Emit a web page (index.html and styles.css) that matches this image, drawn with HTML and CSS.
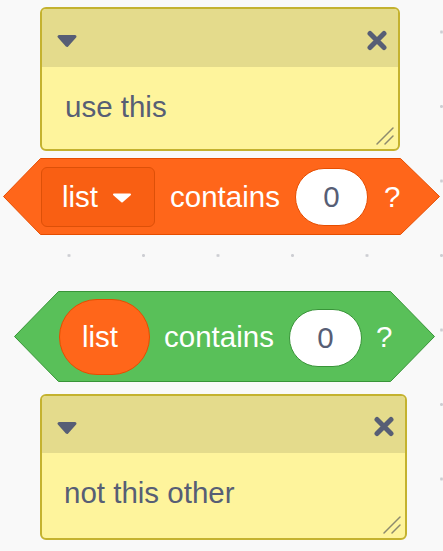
FILE: index.html
```html
<!DOCTYPE html>
<html>
<head>
<meta charset="utf-8">
<link rel="stylesheet" href="styles.css">
</head>
<body>
<div class="ws">
  <div class="note note-a">
    <div class="note-head">
      <svg class="tri" width="22" height="14" viewBox="0 0 22 14"><path d="M3 2.5 H19 L11 11.5 Z" fill="#575e75" stroke="#575e75" stroke-width="3" stroke-linejoin="round"/></svg>
      <svg class="x" width="22" height="21" viewBox="0 0 22 21"><path d="M4 3.5 L18 17.5 M18 3.5 L4 17.5" stroke="#575e75" stroke-width="5" stroke-linecap="round"/></svg>
    </div>
    <div class="note-body">use this
      <svg class="grip" width="20" height="20" viewBox="0 0 20 20"><path d="M2 18 L18 2 M10 18 L18 10" stroke="#8d8a6e" stroke-width="1.5" stroke-linecap="round"/></svg>
    </div>
  </div>

  <div class="block block-list">
    <svg class="shape" width="437" height="77" viewBox="0 0 437 77"><polygon points="0.5,38.5 37.5,0.5 397.5,0.5 436.5,38.5 397.5,76.5 37.5,76.5" fill="#ff661a" stroke="#e64d00"/></svg>
    <div class="dd">list<svg class="dd-tri" width="20" height="10" viewBox="0 0 20 10"><path d="M2 1.5 H18 L10 8.5 Z" fill="#fff" stroke="#fff" stroke-width="2" stroke-linejoin="round"/></svg></div>
    <span class="lbl lbl-c1">contains</span>
    <div class="field field-o">0</div>
    <span class="lbl q1">?</span>
  </div>

  <div class="block block-op">
    <svg class="shape" width="421" height="91" viewBox="0 0 421 91"><polygon points="0.5,45.5 44.5,0.5 376.5,0.5 420.5,45.5 376.5,90.5 44.5,90.5" fill="#59c059" stroke="#389438"/></svg>
    <div class="rep">list</div>
    <span class="lbl lbl-c2">contains</span>
    <div class="field field-g">0</div>
    <span class="lbl q2">?</span>
  </div>

  <div class="note note-b">
    <div class="note-head">
      <svg class="tri" width="22" height="14" viewBox="0 0 22 14"><path d="M3 2.5 H19 L11 11.5 Z" fill="#575e75" stroke="#575e75" stroke-width="3" stroke-linejoin="round"/></svg>
      <svg class="x" width="22" height="21" viewBox="0 0 22 21"><path d="M4 3.5 L18 17.5 M18 3.5 L4 17.5" stroke="#575e75" stroke-width="5" stroke-linecap="round"/></svg>
    </div>
    <div class="note-body">not this other
      <svg class="grip" width="20" height="20" viewBox="0 0 20 20"><path d="M2 18 L18 2 M10 18 L18 10" stroke="#8d8a6e" stroke-width="1.5" stroke-linecap="round"/></svg>
    </div>
  </div>
</div>
</body>
</html>
```
FILE: styles.css
```css
html, body {
  margin: 0;
  padding: 0;
}
body {
  font-family: "Liberation Sans", Arial, sans-serif;
}
.ws {
  box-sizing: border-box;
  width: 443px;
  min-height: 551px;
  padding-top: 7px;
  background-color: #f9f9f9;
  background-image: radial-gradient(circle, #cdced3 1.1px, rgba(249,249,249,0) 1.9px);
  background-size: 74.5px 74.5px;
  background-position: 31.75px -5.25px;
  overflow: hidden;
}
.note {
  box-sizing: border-box;
  margin-left: 40px;
  border: 2px solid #c4b22f;
  border-radius: 6px;
  background: #fef49c;
  overflow: hidden;
  display: flex;
  flex-direction: column;
  color: #575e75;
}
.note-a {
  width: 360px;
  height: 144px;
}
.note-b {
  width: 367px;
  height: 146px;
  margin-top: 12px;
}
.note-head {
  background: #e4db8c;
  height: 58px;
  flex: none;
  display: flex;
  align-items: center;
  justify-content: space-between;
  padding: 4px 10px 0 14px;
  box-sizing: border-box;
}
.note-b .note-head {
  height: 57px;
}
.tri {
  margin-top: 2px;
}
.note-body {
  position: relative;
  flex: 1;
  font-size: 29.5px;
  line-height: 36px;
  padding: 22px 0 0 23px;
}
.note-b .note-body {
  padding-left: 22px;
}
.grip {
  position: absolute;
  right: 3px;
  bottom: 3px;
}
.block {
  position: relative;
  display: flex;
  align-items: center;
  color: #fff;
  font-size: 29.5px;
}
.shape {
  position: absolute;
  left: 0;
  top: 0;
}
.block > *:not(.shape) {
  position: relative;
}
.block-list {
  margin-left: 3px;
  margin-top: 7px;
  width: 437px;
  height: 77px;
  padding-left: 38px;
  box-sizing: border-box;
}
.block-op {
  margin-left: 14px;
  margin-top: 56px;
  width: 421px;
  height: 91px;
  padding-left: 45px;
  box-sizing: border-box;
}
.dd {
  box-sizing: border-box;
  width: 114px;
  height: 60px;
  background: #f95f13;
  border: 1px solid #dd5008;
  border-radius: 6px;
  display: flex;
  align-items: center;
  padding-left: 20px;
}
.dd-tri {
  margin-left: 14px;
  margin-top: 2px;
}
.lbl {
  line-height: normal;
}
.lbl-c1 {
  margin-left: 15px;
}
.lbl-c2 {
  margin-left: 14px;
}
.field {
  box-sizing: border-box;
  width: 73px;
  height: 58px;
  border-radius: 29px;
  background: #fff;
  color: #575e75;
  display: flex;
  align-items: center;
  justify-content: center;
}
.field-o {
  margin-left: 15px;
  border: 1px solid #e64d00;
}
.field-g {
  margin-left: 15px;
  border: 1px solid #389438;
  margin-top: 2px;
}
.q1 {
  margin-left: 16px;
}
.q2 {
  margin-left: 14px;
}
.rep {
  box-sizing: border-box;
  width: 91px;
  height: 76px;
  border-radius: 38px;
  background: #ff661a;
  border: 1px solid #e64d00;
  display: flex;
  align-items: center;
  padding-left: 22px;
}
```
